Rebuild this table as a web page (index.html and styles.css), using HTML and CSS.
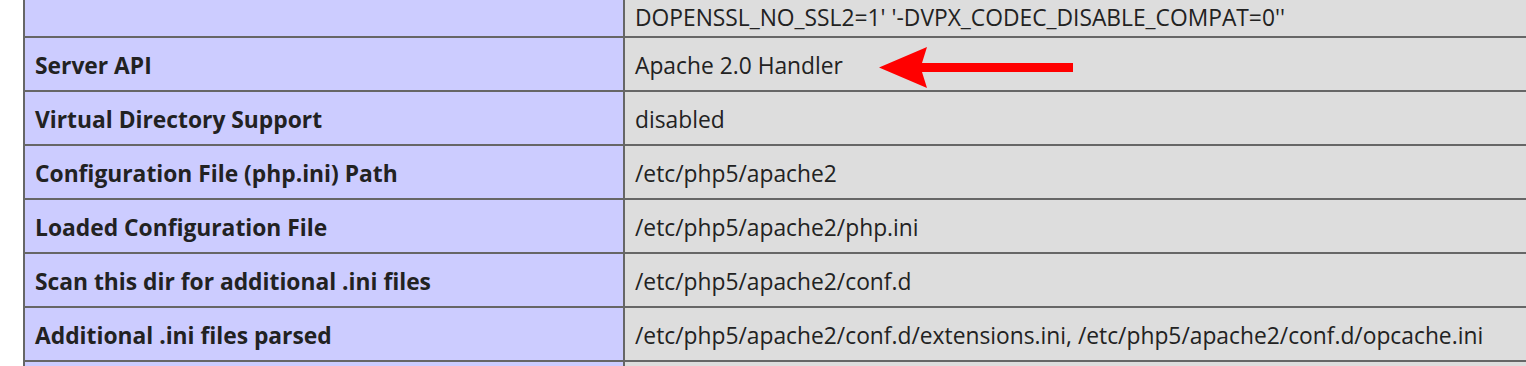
FILE: index.html
```html
<!DOCTYPE html>
<html>
<head>
<meta charset="utf-8">
<title>phpinfo()</title>
<link rel="stylesheet" href="styles.css">
</head>
<body>
<table class="info">
  <tr class="cont">
    <td class="e"></td>
    <td class="v">DOPENSSL_NO_SSL2=1' '-DVPX_CODEC_DISABLE_COMPAT=0''</td>
  </tr>
  <tr>
    <td class="e">Server API</td>
    <td class="v">Apache 2.0 Handler<svg class="arrow" width="196" height="42" viewBox="0 0 196 42"><path d="M0 20.5 L48 0 L43 16 L194 16 L194 25 L43 25 L48 41 Z" fill="#ff0000"/></svg></td>
  </tr>
  <tr>
    <td class="e">Virtual Directory Support</td>
    <td class="v">disabled</td>
  </tr>
  <tr>
    <td class="e">Configuration File (php.ini) Path</td>
    <td class="v">/etc/php5/apache2</td>
  </tr>
  <tr>
    <td class="e">Loaded Configuration File</td>
    <td class="v">/etc/php5/apache2/php.ini</td>
  </tr>
  <tr>
    <td class="e">Scan this dir for additional .ini files</td>
    <td class="v">/etc/php5/apache2/conf.d</td>
  </tr>
  <tr>
    <td class="e">Additional .ini files parsed</td>
    <td class="v">/etc/php5/apache2/conf.d/extensions.ini, /etc/php5/apache2/conf.d/opcache.ini</td>
  </tr>
  <tr class="tail">
    <td class="e"></td>
    <td class="v"></td>
  </tr>
</table>
</body>
</html>
```
FILE: styles.css
```css
html, body {
  margin: 0;
  padding: 0;
  background: #ffffff;
  overflow: hidden;
}
body {
  font-family: "Open Sans", "Noto Sans", sans-serif;
  font-size: 22.8px;
  color: #222222;
}
.info {
  border-collapse: separate;
  border-spacing: 0;
  margin-left: 23px;
  margin-top: -18px;
  width: 1620px;
  table-layout: fixed;
}
.info td {
  border-top: 2px solid #666666;
  border-left: 2px solid #666666;
  padding: 14px 10px 10px;
  line-height: 28px;
  height: 28px;
  white-space: nowrap;
  vertical-align: middle;
}
.info td.e {
  width: 578px;
  background: #ccccff;
  font-weight: 700;
  color: #222222;
}
.info td.v {
  background: #dddddd;
  position: relative;
}
.info tr.cont td {
  padding-top: 20px;
  padding-bottom: 4px;
}
.arrow {
  position: absolute;
  left: 254px;
  top: 9px;
  display: block;
}
```
